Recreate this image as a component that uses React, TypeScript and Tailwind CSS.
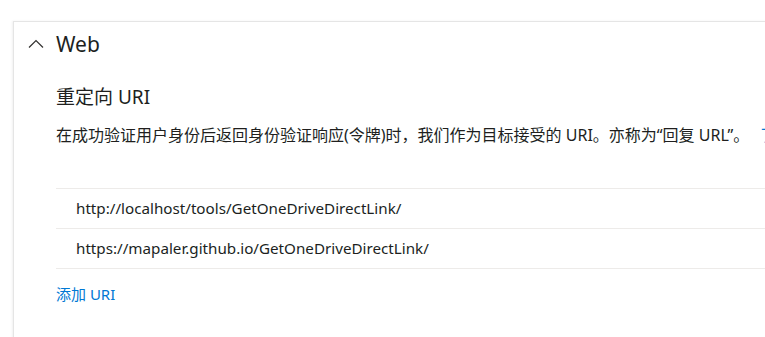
import React from 'react';

const uris = [
  'http://localhost/tools/GetOneDriveDirectLink/',
  'https://mapaler.github.io/GetOneDriveDirectLink/',
];

export default function App() {
  return (
    <div
      className="h-[337px] w-[765px] overflow-hidden bg-white pt-[21px] pl-[13px] text-[#201f1e]"
      style={{ fontFamily: '"Segoe UI", "Noto Sans", "Noto Sans CJK SC", sans-serif' }}
    >
      <section className="h-[400px] w-[820px] border-t border-l border-[#e5e5e5] shadow-[-1px_0_2px_rgba(0,0,0,0.06)]">
        <div className="flex h-[44px] items-center">
          <svg className="ml-[14px] h-[10px] w-[16px]" viewBox="0 0 16 10" fill="none">
            <path d="M1 8.5 L8 1.5 L15 8.5" stroke="#323130" strokeWidth="1.2" />
          </svg>
          <h2 className="ml-[12px] text-[21px] leading-none">Web</h2>
        </div>

        <div className="pl-[42px]">
          <h3 className="mt-[19px] text-[19px] leading-[24px]">重定向 URI</h3>
          <p className="mt-[15px] whitespace-nowrap text-[16px] leading-[22px]">
            在成功验证用户身份后返回身份验证响应(令牌)时，我们作为目标接受的 URI。亦称为“回复 URL”。
            <span className="ml-[11px] text-[#0078d4]">了解有关重定向 URI 及其限制的详细信息</span>
          </p>

          <ul className="mt-[42px] border-t border-[#edebe9]">
            {uris.map((uri) => (
              <li key={uri} className="flex h-[40px] items-center border-b border-[#edebe9] pl-[20px] text-[15.2px]">
                {uri}
              </li>
            ))}
          </ul>

          <button className="mt-[14px] text-[15px] text-[#0078d4]">添加 URI</button>
        </div>
      </section>
    </div>
  );
}
